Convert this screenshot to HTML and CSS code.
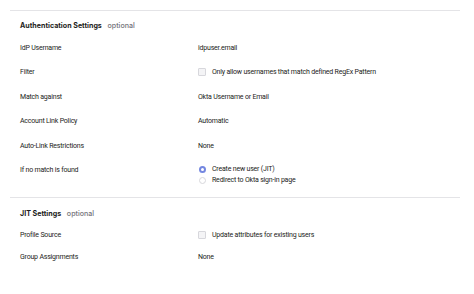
FILE: index.html
```html
<!DOCTYPE html>
<html lang="en">
<head>
  <meta charset="UTF-8">
  <title>IdP Settings</title>
  <link rel="stylesheet" href="styles.css">
</head>
<body>
  <div class="settings">
    <!-- Authentication -->
    <section class="section">
      <h2 class="section-title">Authentication Settings <span class="optional">optional</span></h2>
      <div class="rows">
        <div class="label">IdP Username</div>
        <div class="value">idpuser.email</div>

        <div class="label">Filter</div>
        <div class="value"><span class="checkbox"></span>Only allow usernames that match defined RegEx Pattern</div>

        <div class="label">Match against</div>
        <div class="value">Okta Username or Email</div>

        <div class="label">Account Link Policy</div>
        <div class="value">Automatic</div>

        <div class="label">Auto-Link Restrictions</div>
        <div class="value">None</div>

        <div class="label">If no match is found</div>
        <div class="value radios">
          <div class="radio-row"><span class="radio checked"></span>Create new user (JIT)</div>
          <div class="radio-row"><span class="radio"></span>Redirect to Okta sign-in page</div>
        </div>
      </div>
    </section>

    <!-- JIT -->
    <section class="section">
      <h2 class="section-title">JIT Settings <span class="optional">optional</span></h2>
      <div class="rows jit">
        <div class="label">Profile Source</div>
        <div class="value"><span class="checkbox"></span>Update attributes for existing users</div>

        <div class="label">Group Assignments</div>
        <div class="value">None</div>
      </div>
    </section>
  </div>
</body>
</html>
```

FILE: styles.css
```css
body {
  margin: 0;
  background: #fff;
  font-family: Roboto, "Noto Sans", sans-serif;
  font-size: 7px;
  letter-spacing: -0.2px;
  color: #1d1d21;
}
.settings {
  padding: 10px 14px 0 10px;
}
.section {
  border-top: 1px solid #e4e4e7;
  padding: 9px 0 11px 10px;
}
.section + .section {
  padding-top: 10px;
}
.section-title {
  margin: 0 0 10px;
  font-family: Inter, "Noto Sans", sans-serif;
  font-size: 7.1px;
  letter-spacing: 0;
  line-height: 12px;
  font-weight: 700;
}
.section + .section .section-title {
  margin-bottom: 9px;
}
.optional {
  margin-left: 4px;
  font-weight: 500;
  color: #74747a;
}
.rows {
  display: grid;
  grid-template-columns: 178px 1fr;
  row-gap: 12.4px;
  line-height: 12px;
}
.rows.jit {
  row-gap: 10px;
}
.value {
  display: flex;
  align-items: center;
}
.value.radios {
  flex-direction: column;
  align-items: flex-start;
}
.radio-row {
  display: flex;
  align-items: center;
  height: 11px;
}
.checkbox {
  width: 6px;
  height: 6px;
  border: 1px solid #d7d7dc;
  background: #f4f4f6;
  border-radius: 1px;
  margin-right: 6px;
}
.radio {
  width: 5px;
  height: 5px;
  border: 1px solid #d7d7dc;
  border-radius: 50%;
  margin: 0 6px 0 1px;
}
.radio.checked {
  border: 2px solid #7487e0;
  width: 3px;
  height: 3px;
}
```
